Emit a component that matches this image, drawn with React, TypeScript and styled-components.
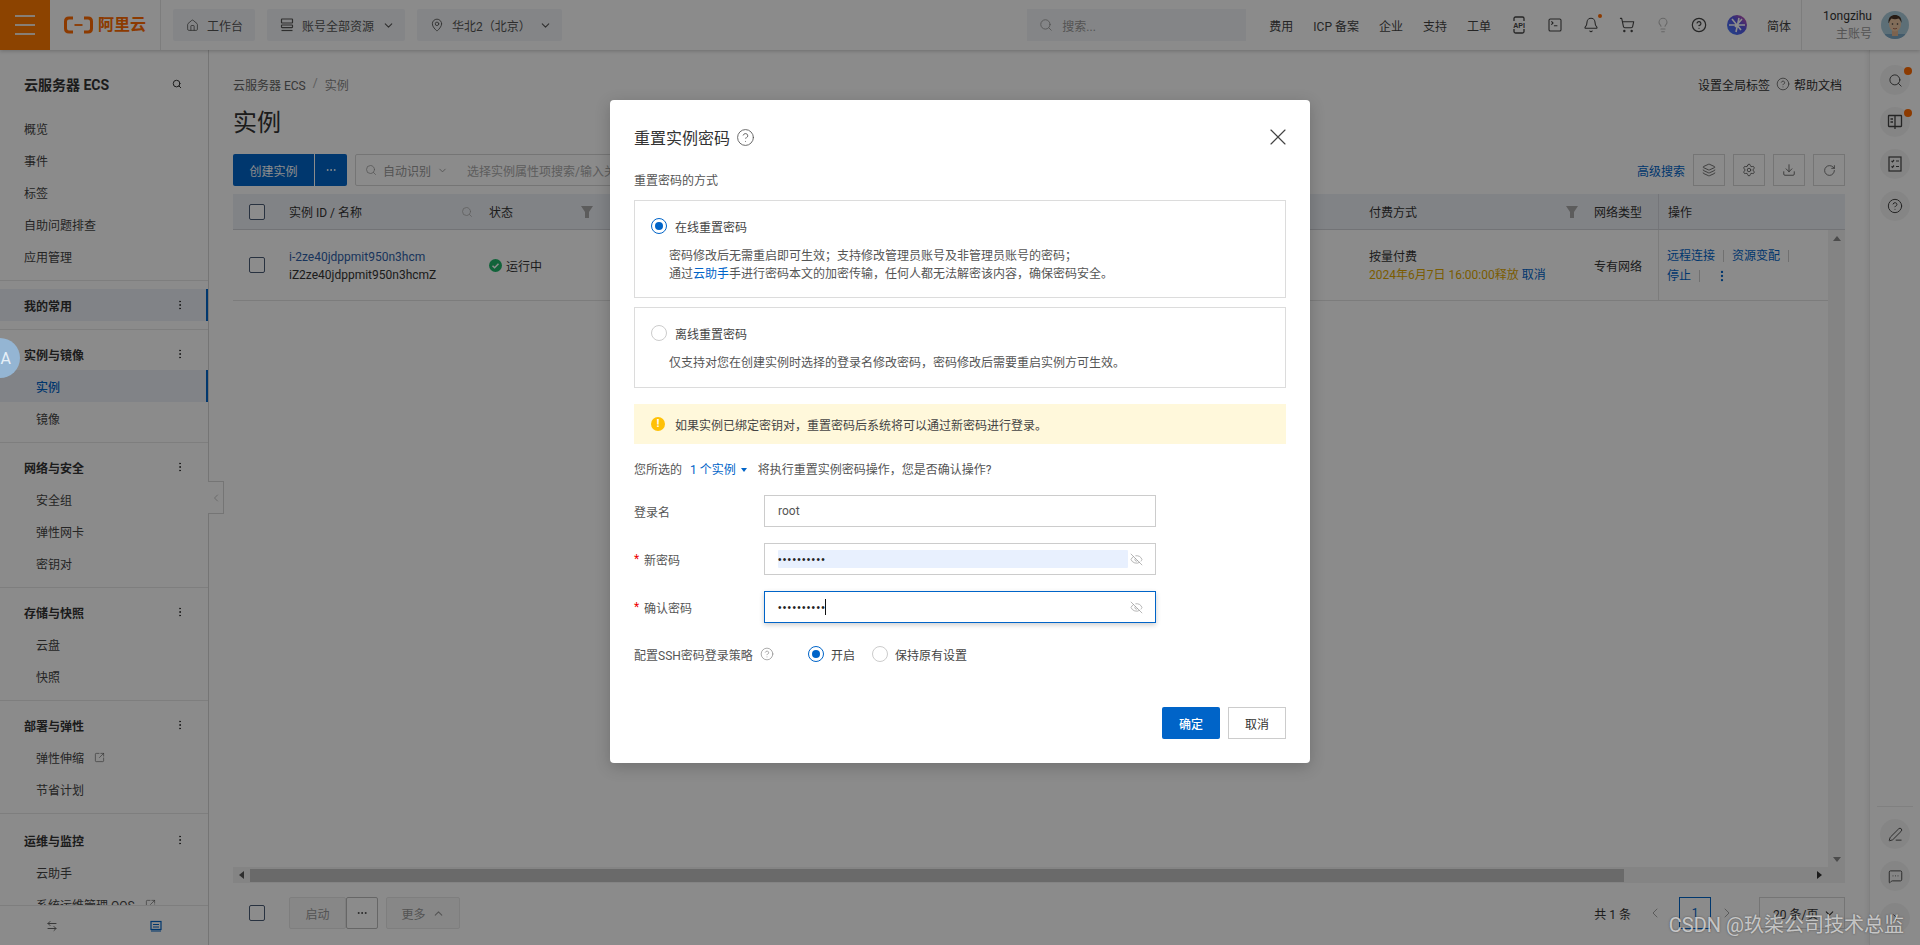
import React from 'react';
import styled, { createGlobalStyle } from 'styled-components';
import {
  Home, MapPin, ChevronDown, ChevronUp, ChevronLeft, ChevronRight, Search, Bell, ShoppingCart, Lightbulb,
  CircleHelp, SquareTerminal, Layers, Settings, Download, RotateCw, X, EyeOff, EllipsisVertical, Ellipsis,
  PenLine, MessageSquareMore, ArrowLeftRight, SquareArrowOutUpRight,
} from 'lucide-react';

const FONT = `Roboto, "Noto Sans CJK SC", "Noto Sans", sans-serif`;
const BLUE = '#0064c8';

const Global = createGlobalStyle`
  html, body { margin: 0; height: 100%; overflow: hidden; background: #fdfdfd; }
  #root { height: 100%; }
  * { box-sizing: border-box; }
  body { font-family: ${FONT}; font-size: 12px; color: #333; }
`;

const Page = styled.div`
  width: 1920px; height: 945px; display: flex; flex-direction: column; background: #fdfdfd; position: relative; overflow: hidden;
`;

/* ---------- top bar ---------- */
const TopBar = styled.header`
  height: 50px; flex: none; display: flex; align-items: center; background: #fdfdfd;
  box-shadow: 0 1px 4px rgba(0,0,0,.22); position: relative; z-index: 2;
`;
const Burger = styled.div`
  width: 50px; height: 50px; background: #ff7a00; display: flex; flex-direction: column; align-items: center; justify-content: center; gap: 7px;
  span { display: block; width: 20px; height: 2px; background: #f6e7d8; }
`;
const LogoArea = styled.div`
  width: 111px; height: 50px; border-right: 1px solid #e3e3e3; display: flex; align-items: center; padding-left: 14px; gap: 5px;
  color: #ff6a00;
`;
const LogoText = styled.span`
  font-size: 16px; font-weight: 700; letter-spacing: 0; color: #ff6a00; line-height: 20px;
`;
const TopButtons = styled.div`
  display: flex; gap: 12px; padding-left: 12px;
`;
const TopButton = styled.div<{ $w: number }>`
  width: ${p => p.$w}px; height: 32px; background: #f1f3f6; display: flex; align-items: center; padding-left: 13px; gap: 8px;
  color: #555; font-size: 12px; border-radius: 2px; white-space: nowrap;
  svg:last-child:not(:first-child) { margin-left: auto; margin-right: 14px; flex: none; }
  svg { flex: none; }
`;
const TopSearch = styled.div`
  width: 219px; height: 32px; background: #f1f3f6; margin-left: auto; display: flex; align-items: center; padding-left: 12px; gap: 9px;
  color: #999; font-size: 12px;
`;
const TopNav = styled.nav`
  display: flex; align-items: center; gap: 20px; margin-left: 23px; color: #444; font-size: 12px;
`;
const NavIcon = styled.span<{ $dot?: boolean; $faint?: boolean }>`
  position: relative; display: flex; color: ${p => (p.$faint ? '#bbb' : '#444')};
  ${p => p.$dot && `&::after { content: ''; position: absolute; top: -3px; right: -3px; width: 4px; height: 4px; border-radius: 50%; background: #ff6a00; }`}
`;
const UserBlock = styled.div`
  margin-left: 10px; width: 119px; height: 50px; border-left: 1px solid #e3e3e3; display: flex; align-items: center; justify-content: flex-end; padding-right: 11px; gap: 9px;
`;
const UserText = styled.div`
  display: flex; flex-direction: column; align-items: flex-end; gap: 0; line-height: 18px; color: #333;
  small { font-size: 12px; color: #999; }
`;

/* ---------- layout ---------- */
const Body = styled.div`
  flex: 1; display: flex; min-height: 0; position: relative;
`;
const Sidebar = styled.aside`
  width: 209px; flex: none; border-right: 1px solid #d6d6d6; display: flex; flex-direction: column; position: relative;
`;
const SideHead = styled.div`
  height: 32px; margin: 18px 0 12px; padding: 0 26px 0 24px; display: flex; align-items: center; justify-content: space-between;
  font-size: 14px; font-weight: 700; color: #333;
`;
const SideScroll = styled.div`
  flex: 1; overflow: hidden; min-height: 0;
`;
const SideGroup = styled.div<{ $pt?: number }>`
  padding: ${p => p.$pt ?? 8}px 0 8px;
  border-bottom: 1px solid #e6e6e6;
`;
const SideHeader = styled.div<{ $active?: boolean }>`
  height: 32px; display: flex; align-items: center; justify-content: space-between; padding: 0 22px 0 24px;
  font-weight: 700; color: #333; position: relative;
  ${p => p.$active && `background: #ebeff6; &::after { content: ''; position: absolute; right: 0; top: 0; bottom: 0; width: 2px; background: ${BLUE}; }`}
`;
const SideItem = styled.div<{ $sub?: boolean; $active?: boolean }>`
  height: 32px; display: flex; align-items: center; gap: 10px; padding-left: ${p => (p.$sub ? 36 : 24)}px; color: ${p => (p.$active ? BLUE : '#444')};
  position: relative; font-weight: ${p => (p.$active ? 500 : 400)};
  ${p => p.$active && `background: #ebeff6; &::after { content: ''; position: absolute; right: 0; top: 0; bottom: 0; width: 2px; background: ${BLUE}; }`}
`;
const SideFoot = styled.div`
  height: 40px; flex: none; border-top: 1px solid #e6e6e6; display: flex; justify-content: space-around; align-items: center; background: #fdfdfd; color: #666;
`;
const FootIcon = styled.span<{ $blue?: boolean }>`
  display: flex; color: ${p => (p.$blue ? BLUE : '#666')};
`;
const CollapseTab = styled.div`
  position: absolute; left: 208px; top: 431px; width: 16px; height: 33px; border: 1px solid #d6d6d6; border-left: none; background: #fdfdfd;
  display: flex; align-items: center; justify-content: center; color: #aaa; z-index: 1;
`;

/* ---------- main ---------- */
const Main = styled.main`
  flex: 1; min-width: 0; padding: 0 24px; display: flex; flex-direction: column;
`;
const CrumbRow = styled.div`
  height: 32px; margin-top: 18px; display: flex; align-items: center; justify-content: space-between; color: #666;
`;
const Crumb = styled.div`
  display: flex; gap: 7px; span:last-child { color: #888; } span:nth-child(2) { color: #aaa; }
`;
const CrumbLinks = styled.div`
  display: flex; align-items: center; color: #333; margin-right: 3px;
  svg { margin: 0 4px 0 6px; color: #555; }
`;
const PageTitle = styled.h1`
  margin: 7px 0 0; font-size: 24px; font-weight: 400; line-height: 32px; color: #333;
`;
const Toolbar = styled.div`
  margin-top: 15px; height: 32px; display: flex; align-items: center;
`;
const PrimaryLeft = styled.div`
  width: 81px; height: 32px; background: ${BLUE}; color: #fff; display: flex; align-items: center; justify-content: center; border-radius: 2px 0 0 2px;
`;
const PrimaryRight = styled.div`
  width: 32px; height: 32px; margin-left: 1px; background: ${BLUE}; color: #fff; display: flex; align-items: center; justify-content: center; border-radius: 0 2px 2px 0;
`;
const SearchBox = styled.div`
  width: 560px; height: 32px; margin-left: 8px; border: 1px solid #d6d6d6; display: flex; align-items: center; padding-left: 9px; color: #999; border-radius: 2px; white-space: nowrap; overflow: hidden;
  svg:first-child { margin-right: 6px; }
  svg:nth-of-type(2) { margin-left: 6px; }
`;
const Placeholder = styled.span`
  margin-left: 19px; color: #aaa;
`;
const AdvLink = styled.a`
  color: ${BLUE}; margin: 0 8px 0 auto;
`;
const SquareBtn = styled.div`
  width: 32px; height: 32px; border: 1px solid #d6d6d6; display: flex; align-items: center; justify-content: center; color: #555;
  & + & { margin-left: 8px; }
`;

const Table = styled.div`
  margin-top: 8px; height: 689px; display: flex; flex-direction: column;
`;
const COLS = '56px 200px 110px 770px 225px 64px 1fr';
const HeadRow = styled.div`
  height: 36px; flex: none; display: grid; grid-template-columns: ${COLS}; background: #eceff4; border-bottom: 1px solid #cfd2d8; color: #333; align-items: center;
`;
const HeadCell = styled.div<{ $pr?: number; $op?: boolean }>`
  height: 100%; display: flex; align-items: center; justify-content: space-between; padding-right: ${p => p.$pr ?? 0}px;
  color: #333;
  ${p => p.$op && `border-left: 1px solid #d6d8de; padding-left: 9px;`}
`;
const CheckCell = styled.div`
  display: flex; align-items: center; padding-left: 16px; height: 100%;
`;
const Check = styled.span`
  width: 16px; height: 16px; display: block; border: 1px solid #4a5b75; border-radius: 2px; background: #fff;
`;
const TableBody = styled.div`
  flex: 1; display: flex; min-height: 0;
`;
const Rows = styled.div`
  flex: 1; min-width: 0;
`;
const Row = styled.div`
  height: 71px; display: grid; grid-template-columns: ${COLS}; border-bottom: 1px solid #e2e2e2; align-items: center;
`;
const Stack = styled.div`
  display: flex; flex-direction: column; line-height: 18px; color: #333; padding-top: 2px;
`;
const Link = styled.a`
  color: ${BLUE};
`;
const LinkId = styled(Link)`
  color: #2f5fa8;
`;
const Status = styled.div`
  display: flex; align-items: center; gap: 4px; color: #333;
`;
const Expire = styled.span`
  color: #e0a800; span { color: ${BLUE}; }
`;
const OpCell = styled.div`
  height: 100%; border-left: 1px solid #e2e2e2; padding: 17px 0 0 8px; display: flex; flex-direction: column; gap: 2px; line-height: 18px;
`;
const OpLine = styled.div`
  display: flex; align-items: center; color: ${BLUE};
  i { width: 1px; height: 12px; background: #ccc; margin: 0 8px; display: block; }
  svg { margin-left: 7px; }
`;
const VScroll = styled.div`
  width: 17px; flex: none; background: #f1f1f1; display: flex; flex-direction: column; justify-content: space-between; align-items: center; padding: 6px 0 5px;
`;
const HScroll = styled.div`
  height: 16px; flex: none; background: #f1f1f1; display: flex; align-items: center; 
`;
const Arrow = styled.span<{ $dir: 'l' | 'r' | 'u' | 'd' }>`
  width: 0; height: 0; display: block; border: 4px solid transparent;
  ${p => p.$dir === 'l' && 'border-left: none; border-right: 5px solid #555;'}
  ${p => p.$dir === 'r' && 'border-right: none; border-left: 5px solid #333;'}
  ${p => p.$dir === 'u' && 'border-top: none; border-bottom: 5px solid #8a8a8a;'}
  ${p => p.$dir === 'd' && 'border-bottom: none; border-top: 5px solid #8a8a8a;'}
`;
const HArrowBox = styled.div<{ $w: number }>`
  width: ${p => p.$w}px; height: 16px; display: flex; align-items: center; justify-content: center; flex: none;
`;
const HThumb = styled.div`
  width: 1374px; height: 13px; background: #c1c1c1;
`;
const HFill = styled.div`
  flex: 1;
`;
const Footer = styled.div`
  margin-top: 14px; height: 32px; display: flex; align-items: center; padding-left: 16px;
`;
const DisabledBtn = styled.div<{ $w: number; $ml?: number; $light?: boolean }>`
  width: ${p => p.$w}px; height: 32px; margin-left: ${p => p.$ml ?? 0}px; display: flex; align-items: center; justify-content: center; gap: 6px;
  background: ${p => (p.$light ? 'transparent' : '#f6f6f6')}; border: 1px solid ${p => (p.$light ? '#bbb' : '#e6e6e6')}; color: ${p => (p.$light ? '#444' : '#999')}; border-radius: 2px;
`;
const Pager = styled.div`
  margin-left: auto; display: flex; align-items: center; color: #333; font-size: 12px;
`;
const PageNum = styled.div`
  width: 32px; height: 32px; margin: 0 8px 0 16px; border: 1px solid ${BLUE}; color: ${BLUE}; display: flex; align-items: center; justify-content: center;
`;
const PageSelect = styled.div`
  width: 86px; height: 32px; margin-left: 24px; border: 1px solid #d6d6d6; display: flex; align-items: center; padding: 0 8px 0 13px; justify-content: space-between; color: #333;
`;
const PagerArrow = styled.span`
  display: flex; color: #999;
`;
const CountText = styled.span`
  margin-right: 16px;
`;

/* ---------- right rail ---------- */
const Rail = styled.aside`
  width: 51px; flex: none; border-left: 1px solid #e9e9e9; box-shadow: -2px 0 4px rgba(0,0,0,.06); display: flex; flex-direction: column; align-items: center; padding: 15px 0 12px; gap: 12px;
`;
const RailBtn = styled.div<{ $dot?: boolean }>`
  width: 30px; height: 30px; border-radius: 50%; background: #f3f3f3; display: flex; align-items: center; justify-content: center; position: relative; color: #444; flex: none;
  ${p => p.$dot && `&::after { content: ''; position: absolute; top: 2px; left: 24px; width: 8px; height: 8px; border-radius: 50%; background: #ff6a00; }`}
`;
const RailBottom = styled.div`
  margin-top: auto; border-top: 1px solid #eaeaea; padding-top: 12px; display: flex; flex-direction: column; gap: 12px; align-items: center; width: 36px;
`;

/* ---------- overlay + modal ---------- */
const Mask = styled.div`
  position: absolute; inset: 0; background: rgba(0,0,0,.45); z-index: 10; display: flex; justify-content: center; align-items: flex-start; padding-top: 100px;
`;
const Modal = styled.div`
  width: 700px; height: 663px; background: #fff; border-radius: 4px; padding: 25px 24px 24px; box-shadow: 0 4px 16px rgba(0,0,0,.2); display: flex; flex-direction: column; color: #333;
`;
const ModalHead = styled.div`
  height: 24px; display: flex; align-items: center; justify-content: space-between;
`;
const ModalTitle = styled.div`
  display: flex; align-items: center; gap: 6px; font-size: 16px; color: #333; font-weight: 400;
  svg { color: #555; }
`;
const CloseBtn = styled.span`
  display: flex; color: #444; margin-right: -6px;
`;
const SectionLabel = styled.div`
  margin-top: 23px; line-height: 18px; color: #555;
`;
const OptionCard = styled.div<{ $h: number; $mt: number }>`
  height: ${p => p.$h}px; margin-top: ${p => p.$mt}px; border: 1px solid #dcdcdc; padding: 15px 16px;
`;
const RadioRow = styled.div`
  height: 20px; display: flex; align-items: center; gap: 8px; color: #444;
`;
const Radio = styled.span<{ $on?: boolean }>`
  width: 16px; height: 16px; border-radius: 50%; flex: none; border: 1px solid ${p => (p.$on ? BLUE : '#ccc')}; display: flex; align-items: center; justify-content: center; background: #fff;
  &::after { content: ''; width: 8px; height: 8px; border-radius: 50%; background: ${p => (p.$on ? BLUE : 'transparent')}; }
`;
const OptionDesc = styled.div`
  margin: 11px 0 0 18px; line-height: 18px; color: #555; a { color: ${BLUE}; }
`;
const Alert = styled.div`
  margin-top: 16px; height: 40px; background: #fff8db; display: flex; align-items: center; padding-left: 17px; gap: 10px; color: #444;
`;
const AlertIcon = styled.span`
  width: 14px; height: 14px; border-radius: 50%; background: #ffc107; color: #fff; display: flex; align-items: center; justify-content: center; font-size: 11px; font-weight: 700; line-height: 14px;
`;
const SelectedLine = styled.div`
  margin-top: 17px; line-height: 18px; color: #555; display: flex; align-items: center;
`;
const SelectedLink = styled.span`
  color: ${BLUE}; margin: 0 0 0 8px; display: flex; align-items: center; gap: 5px;
  &::after { content: ''; border: 3px solid transparent; border-top: 4px solid ${BLUE}; border-bottom: none; margin-right: 11px; }
`;
const Form = styled.div`
  margin-top: 16px; display: flex; flex-direction: column; gap: 16px;
`;
const FormRow = styled.div`
  display: flex; align-items: center; height: 32px;
`;
const FormLabel = styled.div`
  width: 130px; color: #555; display: flex; align-items: center;
`;
const Star = styled.span`
  color: #e00; width: 10px; font-size: 12px;
`;
const Input = styled.div<{ $focus?: boolean }>`
  width: 392px; height: 32px; border: 1px solid ${p => (p.$focus ? BLUE : '#ccc')}; padding: 0 12px 0 13px; display: flex; align-items: center; color: #555; justify-content: space-between;
  ${p => p.$focus && 'box-shadow: 0 2px 5px rgba(0,0,0,.2);'}
  svg { color: #999; flex: none; }
`;
const PwdText = styled.span<{ $fill?: boolean }>`
  display: flex; align-items: center; height: 18px; width: 350px; font-family: "Liberation Sans", sans-serif; font-size: 10px; letter-spacing: 1.3px; color: #222;
  background: ${p => (p.$fill ? '#e8f0fe' : 'transparent')}; border-radius: 1px;
`;
const Caret = styled.i`
  display: block; width: 1px; height: 16px; background: #111; margin-left: -1px;
`;
const SshRow = styled.div`
  margin-top: 20px; height: 22px; display: flex; align-items: center; color: #555;
`;
const SshLabel = styled.span`
  display: flex; align-items: center; gap: 7px; width: 174px; svg { color: #888; }
`;
const RadioInline = styled.span`
  display: flex; align-items: center; gap: 7px; color: #444; margin-right: 17px;
`;
const ModalFoot = styled.div`
  margin-top: auto; display: flex; justify-content: flex-end; gap: 8px;
`;
const OkBtn = styled.div`
  width: 58px; height: 32px; background: ${BLUE}; color: #fff; display: flex; align-items: center; justify-content: center; border-radius: 2px; font-weight: 500;
`;
const CancelBtn = styled.div`
  width: 58px; height: 32px; background: #fff; border: 1px solid #ccc; color: #333; display: flex; align-items: center; justify-content: center;
`;

const TranslateBubble = styled.div`
  position: absolute; left: -20px; top: 338px; width: 40px; height: 40px; border-radius: 50%; background: #94b5d3; color: #e7f0f8; z-index: 11;
  display: flex; align-items: center; justify-content: flex-end; padding-right: 9px; font-size: 16px;
`;
const Watermark = styled.div`
  position: absolute; right: 16px; bottom: 8px; z-index: 12; font-size: 20px; line-height: 24px; color: rgba(225,225,225,.8); text-shadow: 0 0 2px rgba(40,40,40,.6); white-space: nowrap;
`;

/* ---------- drawn icons ---------- */
const LogoMark = () => (
  <svg width="29" height="18" viewBox="0 0 29 18" fill="none">
    <path d="M9 2H5C2.800 2 1.500 3.300 1.500 5.500v7C1.500 14.700 2.800 16 5 16h4" stroke="#ff6a00" strokeWidth="3" />
    <path d="M20 2h4c2.200 0 3.500 1.300 3.500 3.500v7c0 2.200-1.300 3.500-3.500 3.500h-4" stroke="#ff6a00" strokeWidth="3" />
    <path d="M10.500 9h8" stroke="#ff6a00" strokeWidth="1.800" />
  </svg>
);
const ResourceIcon = () => (
  <svg width="14" height="14" viewBox="0 0 14 14" fill="none" stroke="#555" strokeWidth="1.2">
    <rect x="1.500" y="1" width="11" height="4" rx=".5" />
    <rect x="1.500" y="7" width="11" height="2.600" rx=".5" />
    <path d="M1.500 12.500h11" />
  </svg>
);
const AppIcon = () => (
  <svg width="16" height="18" viewBox="0 0 16 18" fill="none" stroke="#444" strokeWidth="1.300">
    <path d="M3 5V2.500C3 1.700 3.700 1 4.500 1h7c.8 0 1.500.7 1.500 1.500V5M3 13v2.500c0 .8.7 1.500 1.500 1.500h7c.8 0 1.500-.7 1.500-1.500V13" />
    <text x="8" y="11.500" textAnchor="middle" fontSize="7" fontFamily="Liberation Sans" fontWeight="700" fill="#444" stroke="none">API</text>
  </svg>
);
const GlobeMark = () => (
  <svg width="20" height="20" viewBox="0 0 20 20">
    <defs>
      <linearGradient id="gm" x1="0" y1="1" x2="1" y2="0">
        <stop offset="0" stopColor="#3f7bff" />
        <stop offset=".6" stopColor="#5a55e0" />
        <stop offset="1" stopColor="#e24fa0" />
      </linearGradient>
    </defs>
    <circle cx="10" cy="10" r="10" fill="url(#gm)" />
    <path d="M2 10h16M12 3l-3 14M5 4l9 11M15 4L8 12" stroke="#fff" strokeWidth="1.600" fill="none" />
  </svg>
);
const Avatar = () => (
  <svg width="28" height="28" viewBox="0 0 28 28">
    <defs><clipPath id="av"><circle cx="14" cy="14" r="14" /></clipPath></defs>
    <g clipPath="url(#av)">
      <rect width="28" height="28" fill="#a9cbd9" />
      <rect x="4" y="23" width="20" height="6" fill="#7aa6c4" />
      <rect x="11" y="18" width="6" height="7" fill="#e2b590" />
      <ellipse cx="14" cy="13" rx="6" ry="7.500" fill="#edc6a2" />
      <path d="M7.500 12C7 6 10.500 4 14 4s7 2 6.500 8c-1-2.500-2-4-3-4.500-2 1-5 1-7 0-1 1-2 2.500-2.500 4.500z" fill="#4a3426" />
      <circle cx="11.500" cy="13" r=".8" fill="#333" />
      <circle cx="16.500" cy="13" r=".8" fill="#333" />
      <path d="M12 17.300c1.300.7 2.700.7 4 0" stroke="#a0563f" strokeWidth=".8" fill="none" />
    </g>
  </svg>
);
const FilterIcon = () => (
  <svg width="12" height="12" viewBox="0 0 12 12" fill="#a8a8a8"><path d="M0 0h12L8 6v6H4V6z" /></svg>
);
const OkIcon = () => (
  <svg width="13" height="13" viewBox="0 0 13 13">
    <circle cx="6.500" cy="6.500" r="6.500" fill="#1fb56a" />
    <path d="M3.500 6.700l2.100 2.100 3.900-4" stroke="#fff" strokeWidth="1.500" fill="none" />
  </svg>
);
const BookIcon = () => (
  <svg width="16" height="16" viewBox="0 0 16 16" fill="none" stroke="#444" strokeWidth="1.300">
    <rect x="1.500" y="1.500" width="13" height="11" rx=".5" />
    <path d="M8 1.500V15M3.500 5h2.500M3.500 8h2.500" />
  </svg>
);
const TaskIcon = () => (
  <svg width="16" height="16" viewBox="0 0 16 16" fill="none" stroke="#444" strokeWidth="1.200">
    <rect x="2" y="1" width="12" height="14" />
    <path d="M4.500 4.800l1 1 1.500-1.800M9 5h3M4.500 10.300l1 1 1.500-1.800M9 10.500h3" />
  </svg>
);
const NoteIcon = () => (
  <svg width="12" height="12" viewBox="0 0 12 12" fill="none" stroke={BLUE} strokeWidth="1.200">
    <rect x="1" y="1.500" width="10" height="8" />
    <path d="M3 4.500h6M3 7h6M1 11h10" />
  </svg>
);

type Item = { t: string; active?: boolean; ext?: boolean };
const groups: { h: string; pt?: number; items: Item[] }[] = [
  { h: '实例与镜像', items: [{ t: '实例', active: true }, { t: '镜像' }] },
  { h: '网络与安全', items: [{ t: '安全组' }, { t: '弹性网卡' }, { t: '密钥对' }] },
  { h: '存储与快照', items: [{ t: '云盘' }, { t: '快照' }] },
  { h: '部署与弹性', items: [{ t: '弹性伸缩', ext: true }, { t: '节省计划' }] },
  { h: '运维与监控', pt: 10, items: [{ t: '云助手' }, { t: '系统运维管理 OOS', ext: true }] },
];

export default function App() {
  return (
    <Page>
      <Global />
      <TopBar>
        <Burger><span /><span /><span /></Burger>
        <LogoArea><LogoMark /><LogoText>阿里云</LogoText></LogoArea>
        <TopButtons>
          <TopButton $w={82}><Home size={13} strokeWidth={1.5} />工作台</TopButton>
          <TopButton $w={138}><ResourceIcon />账号全部资源<ChevronDown size={13} /></TopButton>
          <TopButton $w={145}><MapPin size={14} strokeWidth={1.5} />华北2（北京）<ChevronDown size={13} /></TopButton>
        </TopButtons>
        <TopSearch><Search size={14} strokeWidth={1.5} />搜索...</TopSearch>
        <TopNav>
          <span>费用</span><span>ICP 备案</span><span>企业</span><span>支持</span><span>工单</span>
          <NavIcon><AppIcon /></NavIcon>
          <NavIcon><SquareTerminal size={16} strokeWidth={1.6} /></NavIcon>
          <NavIcon $dot><Bell size={16} strokeWidth={1.6} /></NavIcon>
          <NavIcon><ShoppingCart size={16} strokeWidth={1.6} /></NavIcon>
          <NavIcon $faint><Lightbulb size={16} strokeWidth={1.6} /></NavIcon>
          <NavIcon><CircleHelp size={16} strokeWidth={1.8} /></NavIcon>
          <NavIcon><GlobeMark /></NavIcon>
          <span>简体</span>
        </TopNav>
        <UserBlock>
          <UserText>1ongzihu<small>主账号</small></UserText>
          <Avatar />
        </UserBlock>
      </TopBar>

      <Body>
        <Sidebar>
          <SideHead>云服务器 ECS<Search size={10} strokeWidth={2.4} /></SideHead>
          <SideScroll>
            <SideGroup $pt={0}>
              {['概览', '事件', '标签', '自助问题排查', '应用管理'].map(t => <SideItem key={t}>{t}</SideItem>)}
            </SideGroup>
            <SideGroup>
              <SideHeader $active>我的常用<EllipsisVertical size={12} /></SideHeader>
            </SideGroup>
            {groups.map(g => (
              <SideGroup key={g.h} $pt={g.pt}>
                <SideHeader>{g.h}<EllipsisVertical size={12} /></SideHeader>
                {g.items.map(i => (
                  <SideItem key={i.t} $sub $active={i.active}>
                    {i.t}{i.ext && <SquareArrowOutUpRight size={11} strokeWidth={1.2} />}
                  </SideItem>
                ))}
              </SideGroup>
            ))}
          </SideScroll>
          <SideFoot>
            <FootIcon><ArrowLeftRight size={12} /></FootIcon>
            <FootIcon $blue><NoteIcon /></FootIcon>
          </SideFoot>
        </Sidebar>
        <CollapseTab><ChevronLeft size={12} strokeWidth={1.4} /></CollapseTab>

        <Main>
          <CrumbRow>
            <Crumb><span>云服务器 ECS</span><span>/</span><span>实例</span></Crumb>
            <CrumbLinks>设置全局标签<CircleHelp size={14} strokeWidth={1.3} />帮助文档</CrumbLinks>
          </CrumbRow>
          <PageTitle>实例</PageTitle>
          <Toolbar>
            <PrimaryLeft>创建实例</PrimaryLeft>
            <PrimaryRight><Ellipsis size={12} /></PrimaryRight>
            <SearchBox>
              <Search size={12} strokeWidth={1.5} />自动识别<ChevronDown size={11} />
              <Placeholder>选择实例属性项搜索/输入关键字识别搜索</Placeholder>
            </SearchBox>
            <AdvLink>高级搜索</AdvLink>
            <SquareBtn><Layers size={14} strokeWidth={1.4} /></SquareBtn>
            <SquareBtn><Settings size={14} strokeWidth={1.4} /></SquareBtn>
            <SquareBtn><Download size={14} strokeWidth={1.4} /></SquareBtn>
            <SquareBtn><RotateCw size={13} strokeWidth={1.4} /></SquareBtn>
          </Toolbar>

          <Table>
            <HeadRow>
              <CheckCell><Check /></CheckCell>
              <HeadCell $pr={16}>实例 ID / 名称<Search size={12} strokeWidth={1.5} color="#aaa" /></HeadCell>
              <HeadCell $pr={6}>状态<FilterIcon /></HeadCell>
              <HeadCell />
              <HeadCell $pr={16}>付费方式<FilterIcon /></HeadCell>
              <HeadCell>网络类型</HeadCell>
              <HeadCell $op>操作</HeadCell>
            </HeadRow>
            <TableBody>
              <Rows>
                <Row>
                  <CheckCell><Check /></CheckCell>
                  <Stack><LinkId>i-2ze40jdppmit950n3hcm</LinkId><span>iZ2ze40jdppmit950n3hcmZ</span></Stack>
                  <Status><OkIcon />运行中</Status>
                  <span />
                  <Stack>按量付费<Expire>2024年6月7日 16:00:00释放 <span>取消</span></Expire></Stack>
                  <span>专有网络</span>
                  <OpCell>
                    <OpLine>远程连接<i />资源变配<i /></OpLine>
                    <OpLine>停止<i /><EllipsisVertical size={14} /></OpLine>
                  </OpCell>
                </Row>
              </Rows>
              <VScroll><Arrow $dir="u" /><Arrow $dir="d" /></VScroll>
            </TableBody>
            <HScroll>
              <HArrowBox $w={17}><Arrow $dir="l" /></HArrowBox>
              <HThumb />
              <HFill />
              <HArrowBox $w={17}><Arrow $dir="r" /></HArrowBox>
              <HArrowBox $w={17} />
            </HScroll>
          </Table>

          <Footer>
            <Check />
            <DisabledBtn $w={57} $ml={24}>启动</DisabledBtn>
            <DisabledBtn $w={32} $light><Ellipsis size={12} /></DisabledBtn>
            <DisabledBtn $w={74} $ml={8}>更多<ChevronUp size={13} /></DisabledBtn>
            <Pager>
              <CountText>共 1 条</CountText>
              <PagerArrow><ChevronLeft size={16} strokeWidth={1.3} /></PagerArrow>
              <PageNum>1</PageNum>
              <PagerArrow><ChevronRight size={16} strokeWidth={1.3} /></PagerArrow>
              <PageSelect>20 条/页<ChevronDown size={13} /></PageSelect>
            </Pager>
          </Footer>
        </Main>

        <Rail>
          <RailBtn $dot><Search size={15} strokeWidth={1.5} /></RailBtn>
          <RailBtn $dot><BookIcon /></RailBtn>
          <RailBtn><TaskIcon /></RailBtn>
          <RailBtn><CircleHelp size={16} strokeWidth={1.5} /></RailBtn>
          <RailBottom>
            <RailBtn><PenLine size={15} strokeWidth={1.5} /></RailBtn>
            <RailBtn><MessageSquareMore size={15} strokeWidth={1.5} /></RailBtn>
            <RailBtn><ChevronRight size={15} strokeWidth={1.5} /></RailBtn>
          </RailBottom>
        </Rail>
      </Body>

      <Mask>
        <Modal>
          <ModalHead>
            <ModalTitle>重置实例密码<CircleHelp size={19} strokeWidth={1.1} /></ModalTitle>
            <CloseBtn><X size={28} strokeWidth={1} /></CloseBtn>
          </ModalHead>
          <SectionLabel>重置密码的方式</SectionLabel>
          <OptionCard $h={98} $mt={10}>
            <RadioRow><Radio $on />在线重置密码</RadioRow>
            <OptionDesc>
              密码修改后无需重启即可生效；支持修改管理员账号及非管理员账号的密码；<br />
              通过<a>云助手</a>手进行密码本文的加密传输，任何人都无法解密该内容，确保密码安全。
            </OptionDesc>
          </OptionCard>
          <OptionCard $h={81} $mt={9}>
            <RadioRow><Radio />离线重置密码</RadioRow>
            <OptionDesc>仅支持对您在创建实例时选择的登录名修改密码，密码修改后需要重启实例方可生效。</OptionDesc>
          </OptionCard>
          <Alert><AlertIcon>!</AlertIcon>如果实例已绑定密钥对，重置密码后系统将可以通过新密码进行登录。</Alert>
          <SelectedLine>您所选的<SelectedLink>1 个实例</SelectedLink>将执行重置实例密码操作，您是否确认操作?</SelectedLine>
          <Form>
            <FormRow><FormLabel>登录名</FormLabel><Input>root</Input></FormRow>
            <FormRow>
              <FormLabel><Star>*</Star>新密码</FormLabel>
              <Input><PwdText $fill>••••••••••</PwdText><EyeOff size={13} strokeWidth={1.3} /></Input>
            </FormRow>
            <FormRow>
              <FormLabel><Star>*</Star>确认密码</FormLabel>
              <Input $focus><PwdText>••••••••••<Caret /></PwdText><EyeOff size={13} strokeWidth={1.3} /></Input>
            </FormRow>
          </Form>
          <SshRow>
            <SshLabel>配置SSH密码登录策略<CircleHelp size={14} strokeWidth={1.2} /></SshLabel>
            <RadioInline><Radio $on />开启</RadioInline>
            <RadioInline><Radio />保持原有设置</RadioInline>
          </SshRow>
          <ModalFoot>
            <OkBtn>确定</OkBtn>
            <CancelBtn>取消</CancelBtn>
          </ModalFoot>
        </Modal>
      </Mask>

      <TranslateBubble>A</TranslateBubble>
      <Watermark>CSDN @玖柒公司技术总监</Watermark>
    </Page>
  );
}
